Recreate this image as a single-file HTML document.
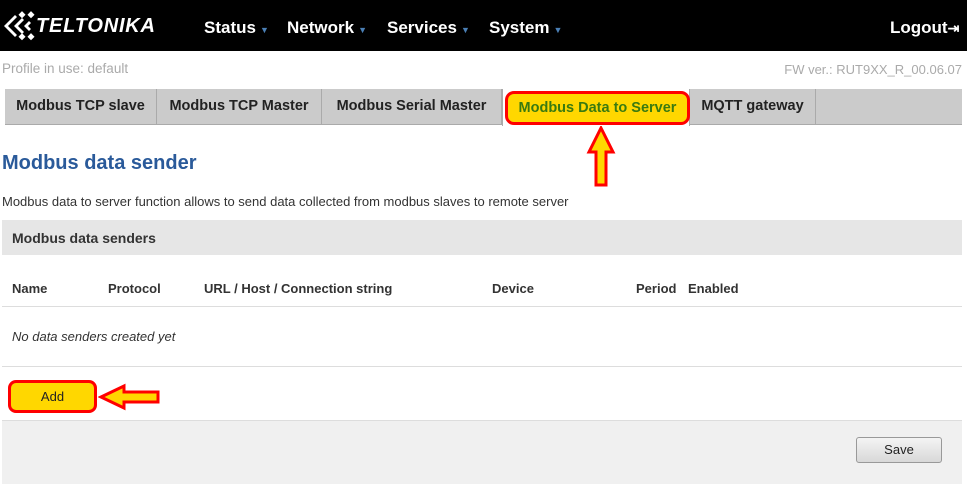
<!DOCTYPE html>
<html><head><style>
body{margin:0;width:967px;height:491px;background:#fff;font-family:"Liberation Sans",Arial,sans-serif;position:relative;overflow:hidden}
.a{position:absolute}
.hdr{left:0;top:0;width:967px;height:51px;background:#000}
.nav{color:#fff;font-weight:bold;font-size:17px;top:18px}
.nav small{color:#4a7fb5;font-size:9px;margin-left:4px}
.tabs{left:5px;top:89px;width:957px;height:35px;background:#cbcbcb;border-bottom:1px solid #aaa}
.tab{top:89px;height:35px;line-height:35px;font-weight:bold;font-size:14.5px;color:#222;text-align:center;border-right:1px solid #aaa;box-sizing:border-box}
</style></head><body>
<div class="a hdr"></div>
<svg class="a" style="left:2px;top:10px" width="40" height="32" viewBox="0 0 40 32">
<g fill="#fff">
<rect x="18" y="2" width="5" height="5" transform="rotate(45 20 4)"/><rect x="27" y="2" width="5" height="5" transform="rotate(45 29 4)"/><rect x="18" y="24" width="5" height="5" transform="rotate(45 20 26)"/><rect x="27" y="24" width="5" height="5" transform="rotate(45 29 26)"/>
<path d="M13 5l2 2-9 9 9 9-2 2L2 16z"/><path d="M20 8l2 2-6 6 6 6-2 2-8-8z"/><path d="M27 11l2 2-3 3 3 3-2 2-5-5z"/></g></svg>
<div class="a" style="left:36px;top:15px;color:#fff;font-weight:bold;font-style:italic;font-size:20px;letter-spacing:0.8px">TELTONIKA</div>
<div class="a nav" style="left:204px">Status<small>▼</small></div>
<div class="a nav" style="left:287px">Network<small>▼</small></div>
<div class="a nav" style="left:387px">Services<small>▼</small></div>
<div class="a nav" style="left:489px">System<small>▼</small></div>
<div class="a nav" style="left:890px">Logout<span style="font-size:14px">⇥</span></div>
<div class="a" style="left:2px;top:61px;color:#aaa;font-size:13.5px">Profile in use: default</div>
<div class="a" style="right:5px;top:62px;color:#aaa;font-size:13px">FW ver.: RUT9XX_R_00.06.07</div>
<div class="a tabs"></div>
<div class="a tab" style="left:5px;width:152px">Modbus TCP slave</div>
<div class="a tab" style="left:157px;width:165px">Modbus TCP Master</div>
<div class="a tab" style="left:322px;width:180px">Modbus Serial Master</div>
<div class="a" style="left:502px;top:89px;width:188px;height:37px;background:#fff;border-left:1px solid #aaa;border-right:1px solid #aaa;box-sizing:border-box"></div>
<div class="a" style="left:505px;top:91px;width:179px;height:28px;background:#ffd700;border:3px solid #f00;border-radius:9px;text-align:center;line-height:28px;font-weight:bold;font-size:14.5px;color:#3a7a10">Modbus Data to Server</div>
<div class="a tab" style="left:690px;width:126px">MQTT gateway</div>
<svg class="a" style="left:586px;top:126px" width="30" height="62"><path d="M15 2L27 26H20V59H10V26H3Z" fill="#ffd700" stroke="#f00" stroke-width="3"/></svg>
<div class="a" style="left:2px;top:152px;color:#2a5a9a;font-weight:bold;font-size:20px">Modbus data sender</div>
<div class="a" style="left:2px;top:194px;color:#333;font-size:13px">Modbus data to server function allows to send data collected from modbus slaves to remote server</div>
<div class="a" style="left:2px;top:220px;width:960px;height:35px;background:#e6e6e6"></div>
<div class="a" style="left:12px;top:230px;font-weight:bold;font-size:14px;color:#333">Modbus data senders</div>
<div class="a" style="left:2px;top:306px;width:960px;height:1px;background:#ddd"></div>
<div class="a" style="top:281px;font-weight:bold;font-size:13px;color:#333;left:0;width:967px">
<span class="a" style="left:12px">Name</span><span class="a" style="left:108px">Protocol</span><span class="a" style="left:204px">URL / Host / Connection string</span><span class="a" style="left:492px">Device</span><span class="a" style="left:636px">Period</span><span class="a" style="left:688px">Enabled</span></div>
<div class="a" style="left:12px;top:329px;font-style:italic;font-size:13px;color:#333">No data senders created yet</div>
<div class="a" style="left:2px;top:366px;width:960px;height:1px;background:#ddd"></div>
<div class="a" style="left:8px;top:380px;width:83px;height:27px;background:#ffd700;border:3px solid #f00;border-radius:8px;text-align:center;line-height:27px;font-size:13px;color:#222">Add</div>
<svg class="a" style="left:98px;top:383px" width="64" height="28"><path d="M3 14L26 3V9H60V19H26V25Z" fill="#ffd700" stroke="#f00" stroke-width="3"/></svg>
<div class="a" style="left:2px;top:420px;width:960px;height:63px;background:#f0f0f0;border-top:1px solid #ddd"></div>
<div class="a" style="left:856px;top:437px;width:84px;height:24px;background:linear-gradient(#f4f4f4,#d8d8d8);border:1px solid #999;border-radius:3px;text-align:center;line-height:24px;font-size:13px;color:#222">Save</div>
</body></html>
